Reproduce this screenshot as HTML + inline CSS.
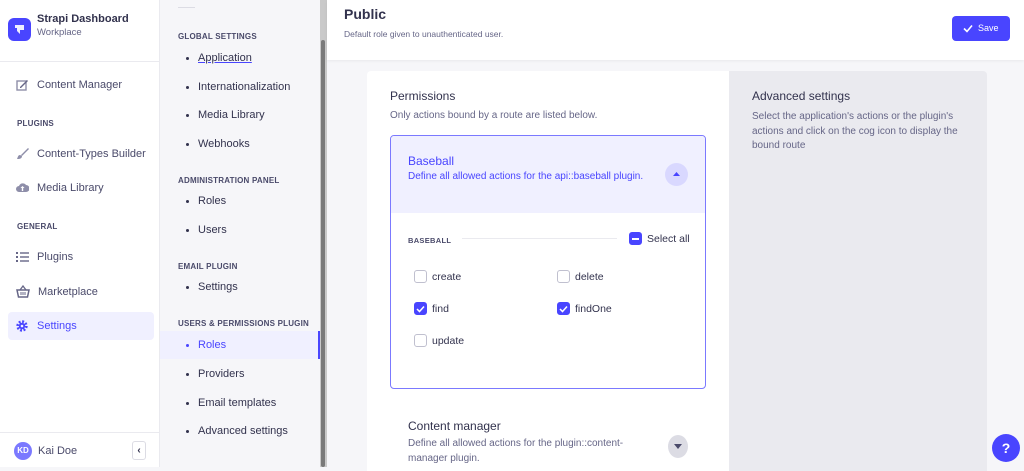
<!DOCTYPE html>
<html><head><meta charset="utf-8"><style>
*{box-sizing:border-box;margin:0;padding:0}
body{width:1024px;height:467px;overflow:hidden;font-family:"Liberation Sans",sans-serif;background:#f6f6f9;position:relative;color:#32324d}
.abs{position:absolute}
.side{left:0;top:0;width:160px;height:467px;background:#fff;border-right:1px solid #eaeaef}
.sec{font-size:8px;font-weight:bold;color:#4a4a6a;letter-spacing:.2px}
.nav{font-size:11px;color:#4a4a6a}
.sub{left:160px;top:0;width:160px;height:467px;background:#f6f6f9}
.si{font-size:11px;color:#32324d;left:198px}
.dot{left:186px;width:3px;height:3px;border-radius:50%;background:#32324d}
.cb{width:13px;height:13px;border:1px solid #c0c0cf;border-radius:3px;background:#fff}
.cbon{background:#4945ff;border-color:#4945ff}
.cbl{font-size:10.5px;color:#32324d}
</style></head><body>
<div class="abs side">
  <div class="abs" style="left:8px;top:18px;width:23px;height:23px;border-radius:6px;background:#4945ff"></div>
  <svg class="abs" style="left:13px;top:23px" width="13" height="13" viewBox="0 0 13 13"><path d="M2 2h9v5H7v4L4 8V5H2z" fill="#fff" opacity=".9"/></svg>
  <div class="abs" style="left:37px;top:13px;font-size:11px;font-weight:bold;color:#32324d">Strapi Dashboard</div>
  <div class="abs" style="left:37px;top:27px;font-size:9.5px;color:#666687">Workplace</div>
  <div class="abs" style="left:0;top:61px;width:160px;height:1px;background:#eaeaef"></div>
  <svg class="abs" style="left:16px;top:78px" width="13" height="13" viewBox="0 0 13 13"><rect x="1" y="3" width="9" height="9" fill="none" stroke="#8e8ea9" stroke-width="1.4"/><path d="M4 9l7-7 1 1-7 7H4z" fill="#666687"/></svg>
  <div class="abs nav" style="left:37px;top:79px">Content Manager</div>
  <div class="abs sec" style="left:17px;top:119px">PLUGINS</div>
  <svg class="abs" style="left:16px;top:147px" width="13" height="13" viewBox="0 0 13 13"><path d="M12 1L5 8l1 1 7-7zM4 8c-2 0-2 2-3 4 2 0 5 0 5-3z" fill="#8e8ea9"/></svg>
  <div class="abs nav" style="left:37px;top:148px">Content-Types Builder</div>
  <svg class="abs" style="left:16px;top:182px" width="13" height="11" viewBox="0 0 13 11"><path d="M3 10a3 3 0 010-6 4 4 0 017-1 3 3 0 010 7z" fill="#8e8ea9"/><path d="M6.5 4l-2 2h1.3v3h1.4V6h1.3z" fill="#fff"/></svg>
  <div class="abs nav" style="left:37px;top:182px">Media Library</div>
  <div class="abs sec" style="left:17px;top:222px">GENERAL</div>
  <svg class="abs" style="left:16px;top:252px" width="13" height="10" viewBox="0 0 13 10"><g fill="#666687"><rect x="0" y="0" width="2" height="2"/><rect x="0" y="4" width="2" height="2"/><rect x="0" y="8" width="2" height="2"/><rect x="4" y="0.3" width="9" height="1.4"/><rect x="4" y="4.3" width="9" height="1.4"/><rect x="4" y="8.3" width="9" height="1.4"/></g></svg>
  <div class="abs nav" style="left:37px;top:251px">Plugins</div>
  <svg class="abs" style="left:16px;top:285px" width="14" height="13" viewBox="0 0 14 13"><path d="M1 5h12l-1.5 7h-9z" fill="none" stroke="#666687" stroke-width="1.5"/><path d="M4 5l3-4 3 4" fill="none" stroke="#666687" stroke-width="1.3"/><path d="M5 7v3M7 7v3M9 7v3" stroke="#666687"/></svg>
  <div class="abs nav" style="left:38px;top:286px">Marketplace</div>
  <div class="abs" style="left:8px;top:312px;width:146px;height:28px;border-radius:4px;background:#f0f0ff"></div>
  <svg class="abs" style="left:16px;top:320px" width="12" height="12" viewBox="0 0 12 12"><circle cx="6" cy="6" r="4.2" fill="none" stroke="#4945ff" stroke-width="3" stroke-dasharray="1.8 1.5"/><circle cx="6" cy="6" r="3.2" fill="#4945ff"/><circle cx="6" cy="6" r="1.3" fill="#f0f0ff"/></svg>
  <div class="abs nav" style="left:37px;top:320px;color:#4945ff">Settings</div>
  <div class="abs" style="left:0;top:432px;width:160px;height:1px;background:#eaeaef"></div>
  <div class="abs" style="left:14px;top:442px;width:18px;height:18px;border-radius:50%;background:#7b79ff;color:#fff;font-size:8px;font-weight:bold;text-align:center;line-height:18px">KD</div>
  <div class="abs nav" style="left:38px;top:445px">Kai Doe</div>
  <div class="abs" style="left:132px;top:441px;width:14px;height:19px;border:1px solid #dcdce4;border-radius:3px;background:#fff;font-size:10px;text-align:center;line-height:17px;color:#32324d;font-weight:bold">‹</div>
</div>
<div class="abs sub">
  <div class="abs" style="left:18px;top:7px;width:17px;height:1px;background:#dcdce4"></div>
  <div class="abs sec" style="left:18px;top:32px">GLOBAL SETTINGS</div>
  <div class="abs sec" style="left:18px;top:176px">ADMINISTRATION PANEL</div>
  <div class="abs sec" style="left:18px;top:262px">EMAIL PLUGIN</div>
  <div class="abs sec" style="left:18px;top:319px">USERS &amp; PERMISSIONS PLUGIN</div>
  <div class="abs" style="left:0;top:331px;width:160px;height:28px;background:#f0f0ff"></div>
  <div class="abs" style="left:158px;top:331px;width:2px;height:28px;background:#4945ff"></div>
</div>
<div class="abs" style="left:320px;top:0;width:7px;height:467px;background:#c9c9c9"></div>
<div class="abs" style="left:321px;top:40px;width:4px;height:427px;background:#7a7a7a;border-radius:2px"></div>
<div class="abs dot" style="top:57px"></div><div class="abs si" style="top:52px;text-decoration:underline;text-decoration-color:#4945ff">Application</div>
<div class="abs dot" style="top:86px"></div><div class="abs si" style="top:81px">Internationalization</div>
<div class="abs dot" style="top:114px"></div><div class="abs si" style="top:109px">Media Library</div>
<div class="abs dot" style="top:143px"></div><div class="abs si" style="top:138px">Webhooks</div>
<div class="abs dot" style="top:200px"></div><div class="abs si" style="top:195px">Roles</div>
<div class="abs dot" style="top:229px"></div><div class="abs si" style="top:224px">Users</div>
<div class="abs dot" style="top:286px"></div><div class="abs si" style="top:281px">Settings</div>
<div class="abs dot" style="top:344px;background:#4945ff"></div><div class="abs si" style="top:339px;color:#4945ff">Roles</div>
<div class="abs dot" style="top:373px"></div><div class="abs si" style="top:368px">Providers</div>
<div class="abs dot" style="top:402px"></div><div class="abs si" style="top:397px">Email templates</div>
<div class="abs dot" style="top:430px"></div><div class="abs si" style="top:425px">Advanced settings</div>

<div class="abs" style="left:327px;top:0;width:697px;height:60px;background:#fff;box-shadow:0 1px 3px rgba(0,0,0,.06)"></div>
<div class="abs" style="left:344px;top:6px;font-size:14px;font-weight:bold;color:#32324d">Public</div>
<div class="abs" style="left:344px;top:29px;font-size:8.5px;color:#666687">Default role given to unauthenticated user.</div>
<div class="abs" style="left:952px;top:16px;width:58px;height:25px;border-radius:4px;background:#4945ff;color:#fff;font-size:9px;line-height:25px;padding-left:26px">Save</div>
<svg class="abs" style="left:963px;top:24px" width="10" height="9" viewBox="0 0 10 9"><path d="M1 4.5l3 3 5-6" fill="none" stroke="#fff" stroke-width="1.6"/></svg>

<div class="abs" style="left:367px;top:71px;width:362px;height:400px;background:#fff;border-radius:4px 0 0 0"></div>
<div class="abs" style="left:729px;top:71px;width:258px;height:400px;background:#eaeaef;border-radius:0 4px 0 0"></div>
<div class="abs" style="left:390px;top:89px;font-size:12px;color:#32324d">Permissions</div>
<div class="abs" style="left:390px;top:110px;font-size:10px;color:#666687">Only actions bound by a route are listed below.</div>
<div class="abs" style="left:752px;top:89px;font-size:12px;color:#32324d">Advanced settings</div>
<div class="abs" style="left:752px;top:110px;font-size:10px;color:#666687;line-height:14.5px;width:220px">Select the application's actions or the plugin's actions and click on the cog icon to display the bound route</div>

<div class="abs" style="left:390px;top:135px;width:316px;height:254px;border:1px solid #7b79ff;border-radius:4px;background:#fff;overflow:hidden">
  <div style="height:77px;background:#f0f0ff"></div>
</div>
<div class="abs" style="left:408px;top:154px;font-size:12px;color:#4945ff">Baseball</div>
<div class="abs" style="left:408px;top:171px;font-size:10px;color:#4945ff">Define all allowed actions for the api::baseball plugin.</div>
<div class="abs" style="left:665px;top:163px;width:23px;height:23px;border-radius:50%;background:#d9d8ff"></div>
<svg class="abs" style="left:672px;top:171px" width="9" height="6" viewBox="0 0 9 6"><path d="M1 5l3.5-4 3.5 4z" fill="#4945ff"/></svg>
<div class="abs" style="left:408px;top:236px;font-size:7.5px;font-weight:bold;color:#4a4a6a;letter-spacing:.3px">BASEBALL</div>
<div class="abs" style="left:462px;top:238px;width:155px;height:1px;background:#eaeaef"></div>
<div class="abs cb cbon" style="left:629px;top:232px"></div>
<div class="abs" style="left:632px;top:238px;width:7px;height:1.6px;background:#fff"></div>
<div class="abs cbl" style="left:647px;top:233px;font-size:10.5px">Select all</div>

<div class="abs cb" style="left:414px;top:270px"></div><div class="abs cbl" style="left:432px;top:271px">create</div>
<div class="abs cb" style="left:557px;top:270px"></div><div class="abs cbl" style="left:575px;top:271px">delete</div>
<div class="abs cb cbon" style="left:414px;top:302px"></div><div class="abs cbl" style="left:432px;top:303px">find</div>
<div class="abs cb cbon" style="left:557px;top:302px"></div><div class="abs cbl" style="left:575px;top:303px">findOne</div>
<svg class="abs" style="left:416px;top:305px" width="9" height="8" viewBox="0 0 9 8"><path d="M1 4l2.5 2.5L8 1.5" fill="none" stroke="#fff" stroke-width="1.5"/></svg>
<svg class="abs" style="left:559px;top:305px" width="9" height="8" viewBox="0 0 9 8"><path d="M1 4l2.5 2.5L8 1.5" fill="none" stroke="#fff" stroke-width="1.5"/></svg>
<div class="abs cb" style="left:414px;top:334px"></div><div class="abs cbl" style="left:432px;top:335px">update</div>

<div class="abs" style="left:408px;top:419px;font-size:12px;color:#32324d">Content manager</div>
<div class="abs" style="left:408px;top:436px;font-size:10px;color:#666687;line-height:15px;width:235px">Define all allowed actions for the plugin::content-manager plugin.</div>
<div class="abs" style="left:668px;top:435px;width:20px;height:23px;border-radius:50%;background:#dcdce4"></div>
<svg class="abs" style="left:674px;top:444px" width="8" height="5" viewBox="0 0 8 5"><path d="M0 0h8L4 5z" fill="#4a4a6a"/></svg>

<div class="abs" style="left:992px;top:434px;width:28px;height:28px;border-radius:50%;background:#4945ff;color:#fff;font-weight:bold;font-size:14px;text-align:center;line-height:28px">?</div>
</body></html>
